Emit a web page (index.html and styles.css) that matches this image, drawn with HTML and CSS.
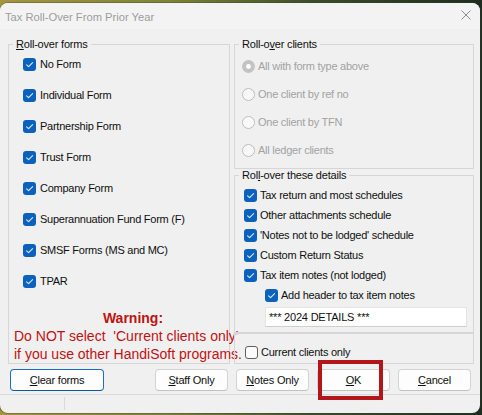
FILE: index.html
```html
<!DOCTYPE html>
<html>
<head>
<meta charset="utf-8">
<title>Tax Roll-Over From Prior Year</title>
<link rel="stylesheet" href="styles.css">
</head>
<body>
<svg class="defs" width="0" height="0" aria-hidden="true">
  <defs>
    <symbol id="cb-on" viewBox="0 0 13 13">
      <rect x="0" y="0" width="13" height="13" rx="3" fill="#0b62be"/>
      <path d="M3.6 6.8 L5.6 8.7 L9.6 4.6" fill="none" stroke="#dce9f7" stroke-width="1.1" stroke-linecap="round" stroke-linejoin="round"/>
    </symbol>
    <symbol id="cb-off" viewBox="0 0 13 13">
      <rect x="0.5" y="0.5" width="12" height="12" rx="2.5" fill="#fbfbfb" stroke="#5f5f5f" stroke-width="1"/>
    </symbol>
    <symbol id="rb-sel" viewBox="0 0 13 13">
      <circle cx="6.5" cy="6.5" r="6.5" fill="#c3c3c3"/>
      <circle cx="6.5" cy="6.5" r="2.4" fill="#ffffff"/>
    </symbol>
    <symbol id="rb-off" viewBox="0 0 13 13">
      <circle cx="6.5" cy="6.5" r="6" fill="#f9f9f9" stroke="#bdbdbd" stroke-width="1"/>
    </symbol>
  </defs>
</svg>

<div class="window">
  <div class="titlebar">
    <span class="title">Tax Roll-Over From Prior Year</span>
    <svg class="close" width="10" height="10" viewBox="0 0 10 10"><path d="M0.5 0.5 L9.5 9.5 M9.5 0.5 L0.5 9.5" stroke="#8c8c8c" stroke-width="1"/></svg>
  </div>

  <div class="content">
    <div class="columns">
      <fieldset class="group forms">
        <legend><u>R</u>oll-over forms</legend>
        <div class="list forms-list">
          <div class="row"><svg class="box"><use href="#cb-on"/></svg><span>No Form</span></div>
          <div class="row"><svg class="box"><use href="#cb-on"/></svg><span>Individual Form</span></div>
          <div class="row"><svg class="box"><use href="#cb-on"/></svg><span>Partnership Form</span></div>
          <div class="row"><svg class="box"><use href="#cb-on"/></svg><span>Trust Form</span></div>
          <div class="row"><svg class="box"><use href="#cb-on"/></svg><span>Company Form</span></div>
          <div class="row"><svg class="box"><use href="#cb-on"/></svg><span>Superannuation Fund Form (F)</span></div>
          <div class="row"><svg class="box"><use href="#cb-on"/></svg><span>SMSF Forms (MS and MC)</span></div>
          <div class="row"><svg class="box"><use href="#cb-on"/></svg><span>TPAR</span></div>
        </div>
        <div class="warning">
          <div class="warn-title">Warning:</div>
          <div>Do NOT select&nbsp; 'Current clients only'</div>
          <div>if you use other HandiSoft programs.</div>
        </div>
      </fieldset>

      <div class="right">
        <fieldset class="group clients">
          <legend>Roll-o<u>v</u>er clients</legend>
          <div class="list clients-list">
            <div class="row disabled"><svg class="box"><use href="#rb-sel"/></svg><span>All with form type above</span></div>
            <div class="row disabled"><svg class="box"><use href="#rb-off"/></svg><span>One client by ref no</span></div>
            <div class="row disabled"><svg class="box"><use href="#rb-off"/></svg><span>One client by TFN</span></div>
            <div class="row disabled"><svg class="box"><use href="#rb-off"/></svg><span>All ledger clients</span></div>
          </div>
        </fieldset>

        <fieldset class="group details">
          <legend>Rol<u>l</u>-over these details</legend>
          <div class="list details-list">
            <div class="row"><svg class="box"><use href="#cb-on"/></svg><span>Tax return and most schedules</span></div>
            <div class="row"><svg class="box"><use href="#cb-on"/></svg><span>Other attachments schedule</span></div>
            <div class="row"><svg class="box"><use href="#cb-on"/></svg><span>'Notes not to be lodged' schedule</span></div>
            <div class="row"><svg class="box"><use href="#cb-on"/></svg><span>Custom Return Status</span></div>
            <div class="row"><svg class="box"><use href="#cb-on"/></svg><span>Tax item notes (not lodged)</span></div>
            <div class="row indent"><svg class="box"><use href="#cb-on"/></svg><span>Add header to tax item notes</span></div>
          </div>
          <div class="textbox">*** 2024 DETAILS ***</div>
        </fieldset>

        <div class="group current">
          <div class="row"><svg class="box"><use href="#cb-off"/></svg><span>Current clients only</span></div>
        </div>
      </div>
    </div>

    <div class="buttons">
      <div class="btn default clear"><u>C</u>lear forms</div>
      <div class="btn"><u>S</u>taff Only</div>
      <div class="btn"><u>N</u>otes Only</div>
      <div class="btn"><u>O</u>K</div>
      <div class="btn"><u>C</u>ancel</div>
    </div>
  </div>

  <div class="statusbar">
    <div class="status-cell first"></div>
    <div class="status-cell"></div>
  </div>

  <div class="highlight"></div>
</div>
</body>
</html>
```

FILE: styles.css
```css
* {
  box-sizing: border-box;
}

html,
body {
  margin: 0;
  padding: 0;
}

body {
  width: 482px;
  height: 415px;
  overflow: hidden;
  background: linear-gradient(90deg, #a3963e 0%, #7d8436 35%, #3b4d28 65%, #1d2c1e 100%);
  font-family: "Liberation Sans", Arial, sans-serif;
  color: #0f0f0f;
}

.defs {
  position: absolute;
  width: 0;
  height: 0;
  overflow: hidden;
}

.window {
  position: relative;
  margin-top: 3px;
  width: 480px;
  height: 410px;
  background: #f0f0f0;
  border-radius: 8px;
  overflow: hidden;
  box-shadow: 0 0 0 1px rgba(60, 60, 60, 0.35);
}

/* Title bar */
.titlebar {
  height: 26px;
  background: #f3f3f3;
  display: flex;
  align-items: center;
  justify-content: space-between;
  padding: 0 9px 0 5px;
}

.title {
  font-size: 11.2px;
  color: #9d9d9d;
  margin-top: 1px;
}

.close {
  display: block;
  margin-top: -3px;
}

/* Content */
.content {
  padding: 9px 7px 0 8px;
}

.columns {
  display: grid;
  grid-template-columns: 222px 240px;
  column-gap: 4px;
  align-items: start;
}

.group {
  margin: 0;
  padding-left: 0;
  padding-right: 0;
  border: 1px solid #d6d6d6;
  min-width: 0;
}

fieldset.group legend {
  margin-left: 4px;
  padding: 0 3px;
  font-size: 11px;
  line-height: 13px;
  height: 13px;
  letter-spacing: -0.2px;
  color: #0f0f0f;
}

.list {
  display: flex;
  flex-direction: column;
}

.row {
  display: flex;
  align-items: center;
  font-size: 11px;
  letter-spacing: -0.25px;
  white-space: nowrap;
}

.box {
  width: 13px;
  height: 13px;
  flex: 0 0 13px;
  display: block;
}

/* Roll-over forms */
.forms {
  padding-top: 4px;
  padding-bottom: 0;
}

.forms-list {
  row-gap: 13px;
  margin-left: 14px;
}

.forms-list .row {
  height: 18px;
  gap: 4px;
}

.warning {
  margin-top: 19px;
  margin-left: 5px;
  width: 230px;
  color: #c01212;
  font-size: 14px;
  line-height: 18px;
  white-space: nowrap;
}

.warn-title {
  font-weight: bold;
  text-align: center;
  padding-left: 8px;
}

/* Right column */
.right {
  display: flex;
  flex-direction: column;
}

.clients {
  padding-top: 7px;
  padding-bottom: 10px;
}

.clients-list {
  row-gap: 12px;
  margin-left: 7px;
}

.clients-list .row {
  height: 16px;
  gap: 3px;
}

.row.disabled {
  color: #a2a2a2;
}

.details {
  padding-top: 5px;
  padding-bottom: 5px;
}

.details-list {
  row-gap: 4px;
  margin-left: 9px;
}

.details-list .row {
  height: 16px;
  gap: 3px;
}

.details-list .row.indent {
  margin-left: 21px;
}

.textbox {
  margin: 4px 0 0 30px;
  width: 202px;
  height: 20px;
  background: #ffffff;
  border: 1px solid #e4e4e4;
  border-bottom-color: #cfcfcf;
  font-size: 11px;
  letter-spacing: -0.2px;
  line-height: 18px;
  padding-left: 3px;
  white-space: nowrap;
}

.current {
  height: 31px;
  padding-top: 10px;
}

.current .row {
  height: 16px;
  gap: 3px;
  margin-left: 10px;
}

/* Buttons */
.buttons {
  display: flex;
  gap: 8px;
  margin-top: 5px;
  padding: 0 2px;
}

.btn {
  width: 73px;
  height: 22px;
  background: #fdfdfd;
  border: 1px solid #d3d3d3;
  border-bottom-color: #c2c2c2;
  border-radius: 4px;
  font-size: 11px;
  letter-spacing: -0.2px;
  line-height: 20px;
  text-align: center;
  color: #0f0f0f;
}

.btn.clear {
  width: 94px;
  margin-right: auto;
}

.btn.default {
  border-color: #1a6fc4;
  border-bottom-color: #0b5aa8;
}

/* Status bar */
.statusbar {
  margin-top: 3px;
  height: 19px;
  border-top: 1px solid #d9d9d9;
  display: flex;
  padding: 2px 0 3px 0;
}

.status-cell.first {
  width: 65px;
  border-right: 1px solid #d9d9d9;
}

/* Red highlight drawn over the OK button */
.highlight {
  position: absolute;
  left: 318px;
  top: 357px;
  width: 65px;
  height: 40px;
  border: 4px solid #b3161a;
}
```
